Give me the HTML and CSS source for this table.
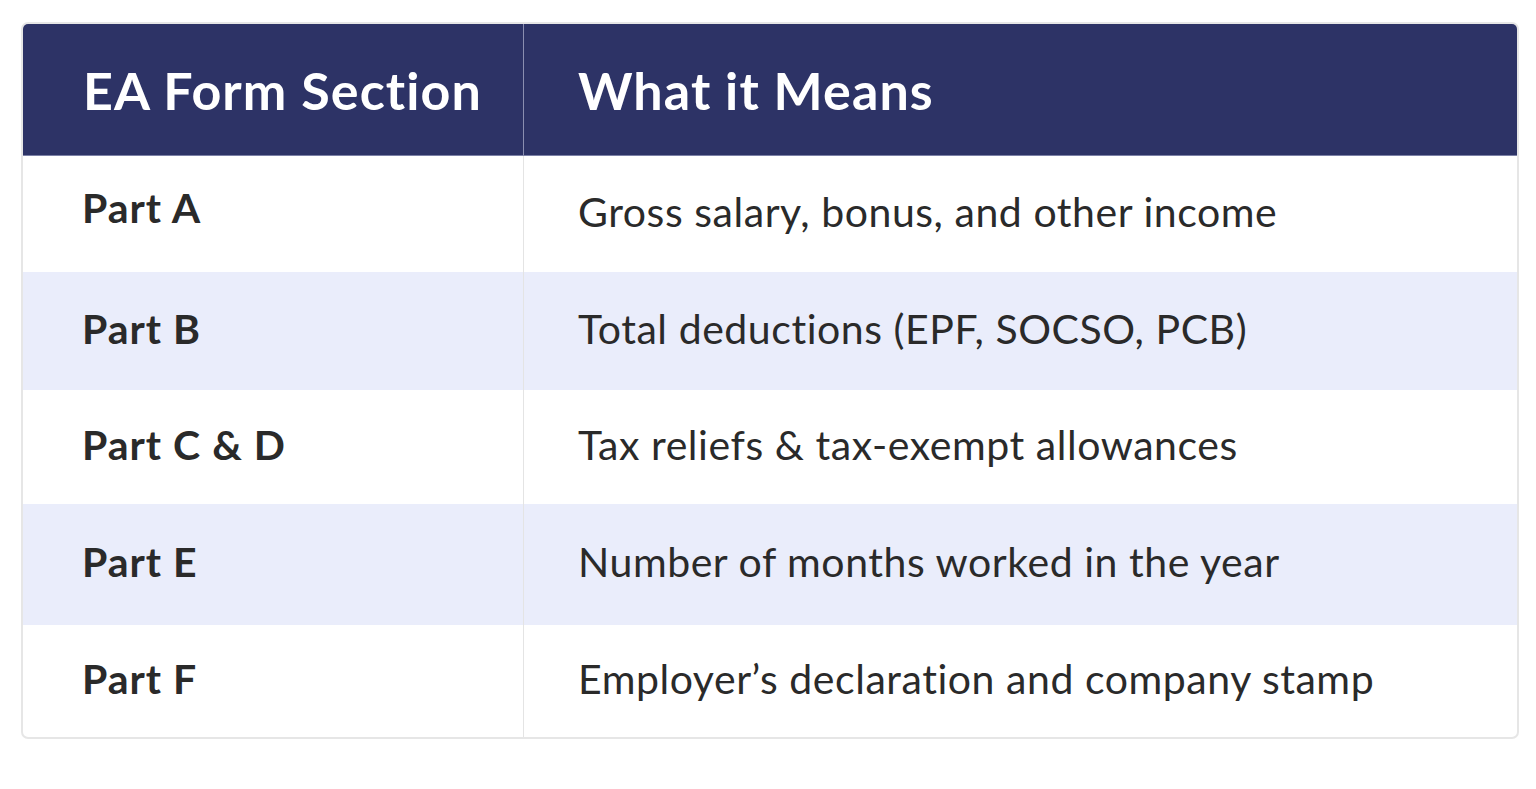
FILE: index.html
```html
<!DOCTYPE html>
<html>
<head>
<meta charset="utf-8">
<link rel="stylesheet" href="styles.css">
</head>
<body>
<div class="wrap">
<table class="ea">
  <thead>
    <tr><th class="c1">EA Form Section</th><th class="c2">What it Means</th></tr>
  </thead>
  <tbody>
    <tr class="r1"><td class="c1">Part A</td><td class="c2">Gross salary, bonus, and other income</td></tr>
    <tr class="r2 alt"><td class="c1">Part B</td><td class="c2">Total deductions (EPF, SOCSO, PCB)</td></tr>
    <tr class="r3"><td class="c1">Part C &amp; D</td><td class="c2">Tax reliefs &amp; tax-exempt allowances</td></tr>
    <tr class="r4 alt"><td class="c1">Part E</td><td class="c2">Number of months worked in the year</td></tr>
    <tr class="r5"><td class="c1">Part F</td><td class="c2">Employer’s declaration and company stamp</td></tr>
  </tbody>
</table>
</div>
</body>
</html>
```

FILE: styles.css
```css
html, body { margin: 0; padding: 0; background: #ffffff; }
body { font-family: "Lato", "Open Sans", sans-serif; }
.wrap { padding: 22px 0 0 21px; }
.ea {
  width: 1498px;
  border-collapse: separate;
  border-spacing: 0;
  border: 2px solid #e6e6e6;
  border-radius: 7px;
  overflow: hidden;
}
.ea th {
  background: #2d3366;
  color: #ffffff;
  font-weight: 700;
  font-size: 52px;
  letter-spacing: 1.1px;
  text-align: left;
  height: 131px;
  padding: 0;
  vertical-align: middle;
  border-bottom: 1px solid #7b80a6;
}
.ea th.c1 { width: 501px; padding-left: 60px; border-right: 1px solid #8a8eb0; box-sizing: border-box; }
.ea th.c2 { padding-left: 54px; }
.ea td {
  font-size: 41px;
  color: #2a2a2a;
  letter-spacing: 0.55px;
  padding: 0 0 6px 0;
  vertical-align: middle;
}
.ea td.c1 { font-weight: 700; padding-left: 59px; letter-spacing: 1px; border-right: 1px solid #e4e4e4; }
.ea td.c2 { padding-left: 54px; }
.r1 td { height: 102px; }
.r1 td.c1 { padding-bottom: 14px; }
.r2 td { height: 112px; }
.r3 td { height: 108px; }
.r4 td { height: 115px; }
.r5 td { height: 106px; }
.alt td { background: #eaedfb; }
```
